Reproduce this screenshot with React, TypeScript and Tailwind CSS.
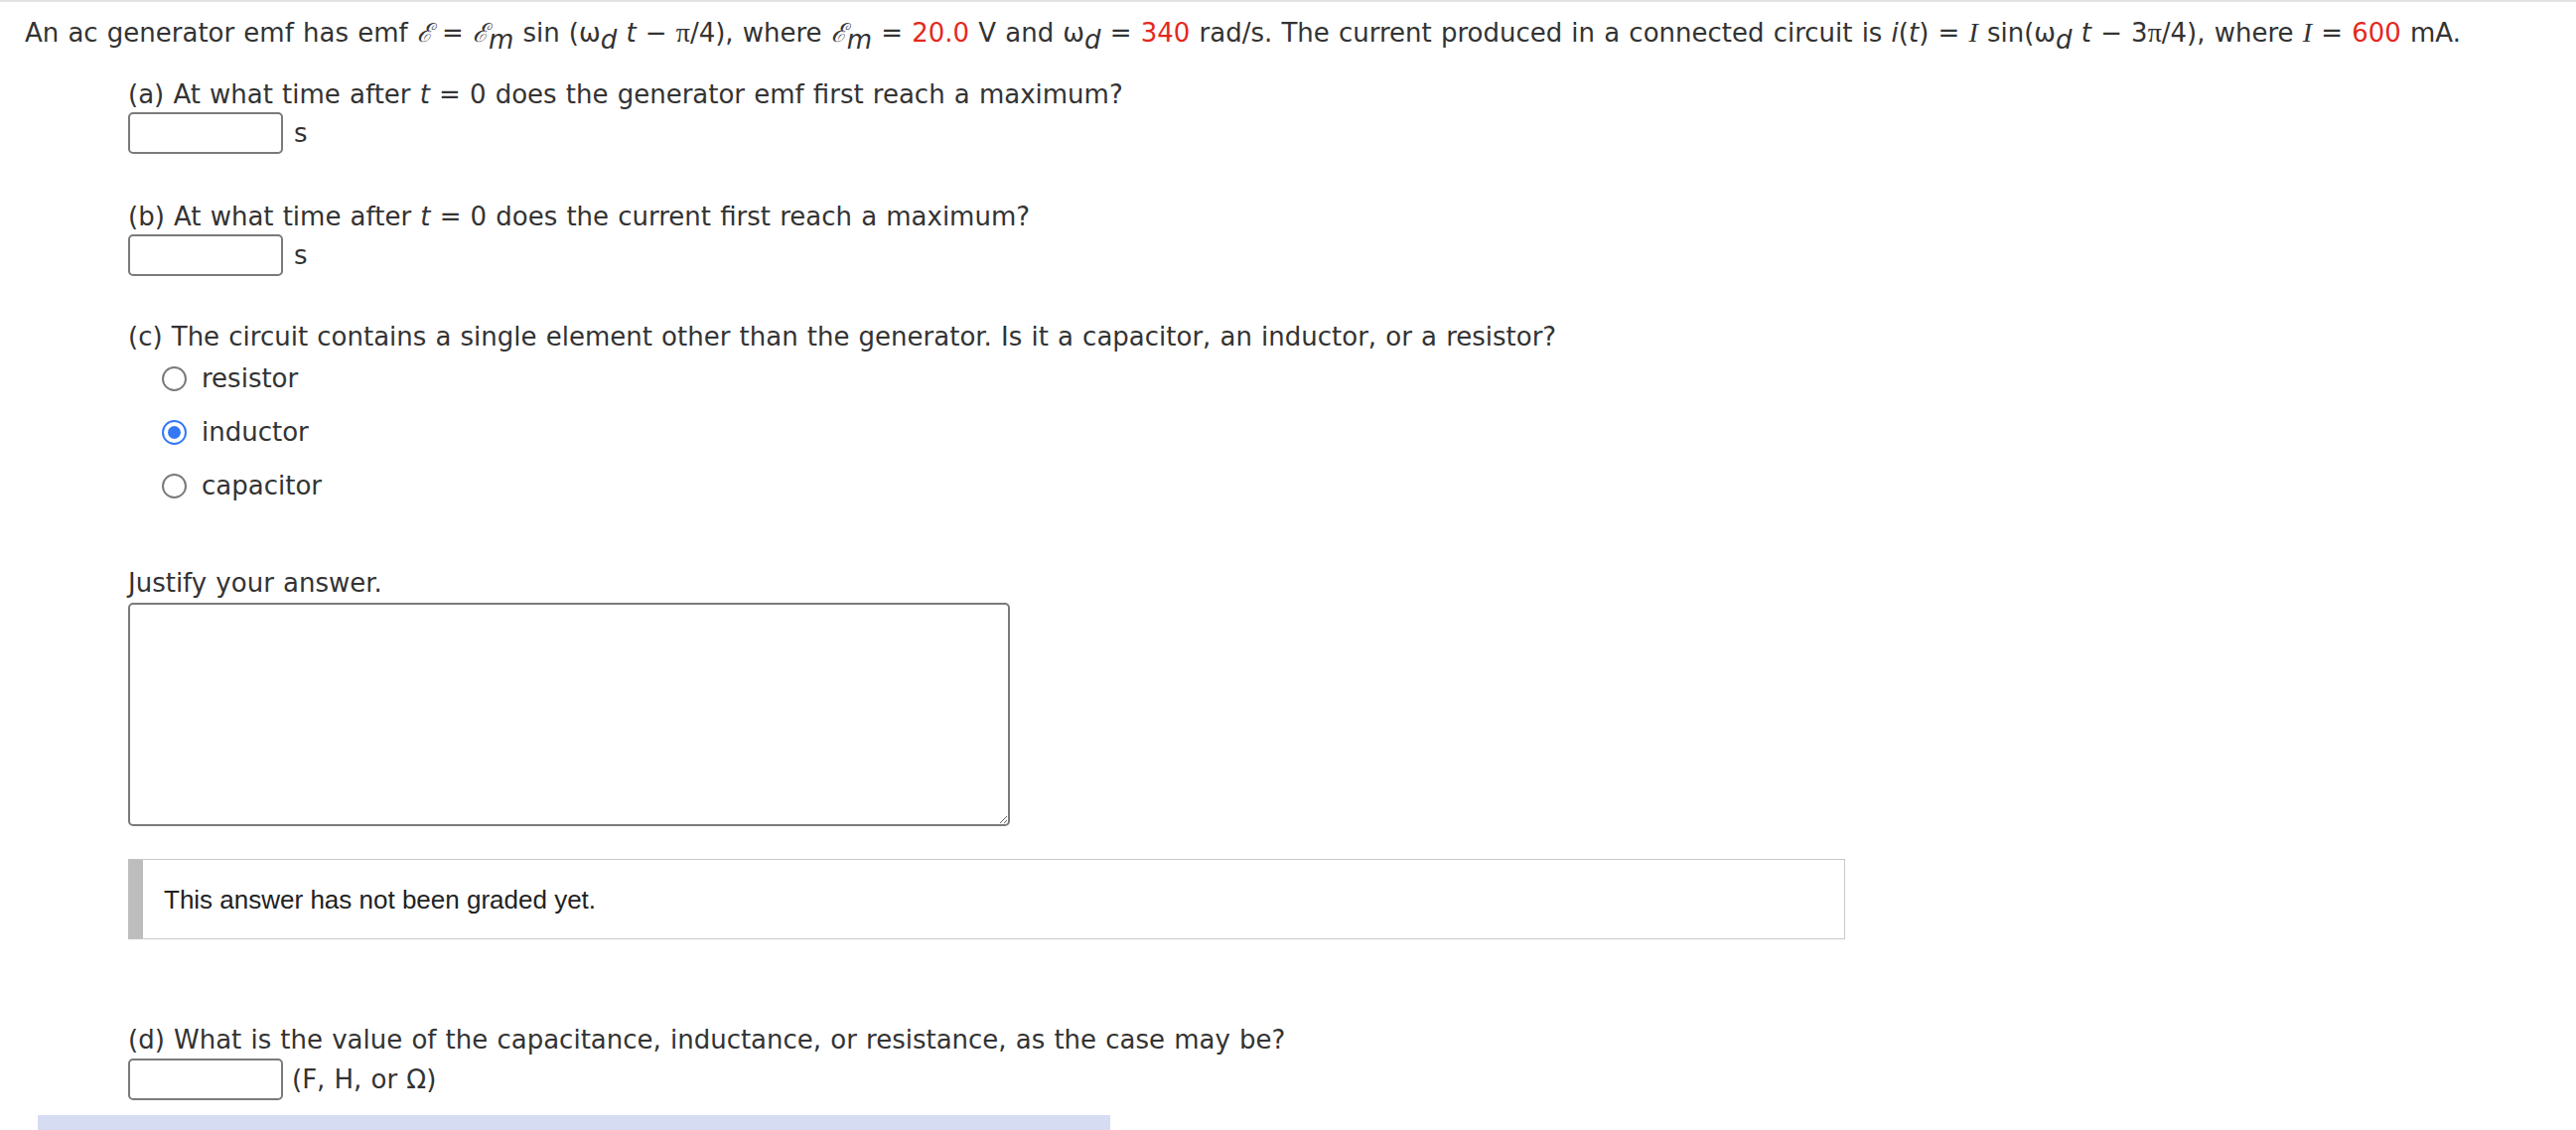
import React from "react";

const Red = ({ children }: { children: React.ReactNode }) => (
  <span className="text-[#e5281c]">{children}</span>
);

const Sub = ({ children }: { children: React.ReactNode }) => (
  <span className="relative top-[7px] italic">{children}</span>
);

const Scr = () => <span className="font-['DejaVu_Serif',serif] italic">ℰ</span>;

const Pi = () => <span className="font-['Liberation_Serif',serif] text-[28px]">π</span>;

const Radio = ({ checked }: { checked?: boolean }) =>
  checked ? (
    <span className="flex h-[25px] w-[25px] items-center justify-center rounded-full border-[2px] border-[#3478f6] bg-white">
      <span className="h-[13px] w-[13px] rounded-full bg-[#3478f6]" />
    </span>
  ) : (
    <span className="h-[25px] w-[25px] rounded-full border-[2px] border-[#7a7a7a] bg-white" />
  );

const Field = () => (
  <input
    type="text"
    className="h-[42px] w-[156px] rounded-[5px] border-[2px] border-[#7a7a7a] bg-white px-2 outline-none"
  />
);

export default function App() {
  return (
    <div className="min-h-[1138px] w-[2594px] overflow-hidden border-t-2 border-[#e2e2e2] bg-white font-['DejaVu_Sans',sans-serif] text-[26px] leading-[30px] text-[#333] [word-spacing:0.9px]">
      <p className="pl-[25px] pt-[16px] whitespace-nowrap">
        An ac generator emf has emf <Scr /> = <Scr />
        <Sub>m</Sub> sin (ω<Sub>d</Sub> <i>t</i> − <Pi />/4), where <Scr />
        <Sub>m</Sub> = <Red>20.0</Red> V and ω<Sub>d</Sub> = <Red>340</Red> rad/s. The current
        produced in a connected circuit is <i>i</i>(<i>t</i>) ={" "}
        <i className="font-['Liberation_Serif',serif] text-[28px]">I</i> sin(ω<Sub>d</Sub>{" "}
        <i>t</i> − 3<Pi />/4), where{" "}
        <i className="font-['Liberation_Serif',serif] text-[28px]">I</i> ={" "}
        <Red>600</Red> mA.
      </p>

      <div className="pl-[129px]">
        <p className="mt-[32px]">
          (a) At what time after <i>t</i> = 0 does the generator emf first reach a maximum?
        </p>
        <div className="mt-[3px] flex items-center gap-[11px]">
          <Field />
          <span>s</span>
        </div>

        <p className="mt-[48px]">
          (b) At what time after <i>t</i> = 0 does the current first reach a maximum?
        </p>
        <div className="mt-[3px] flex items-center gap-[11px]">
          <Field />
          <span>s</span>
        </div>

        <p className="mt-[46px]">
          (c) The circuit contains a single element other than the generator. Is it a capacitor,
          an inductor, or a resistor?
        </p>
        <div className="flex flex-col pl-[34px]">
          <label className="flex h-[54px] items-center gap-[15px]">
            <Radio />
            <span>resistor</span>
          </label>
          <label className="flex h-[54px] items-center gap-[15px]">
            <Radio checked />
            <span>inductor</span>
          </label>
          <label className="flex h-[54px] items-center gap-[15px]">
            <Radio />
            <span>capacitor</span>
          </label>
        </div>

        <p className="mt-[56px]">Justify your answer.</p>
        <textarea className="mt-[5px] block h-[225px] w-[888px] rounded-[5px] border-[2px] border-[#7a7a7a] bg-white outline-none" />

        <div className="mt-[33px] flex h-[81px] w-[1729px] items-center border border-l-[15px] border-[#c9c9c9] border-l-[#bdbdbd] bg-white pl-[21px] font-['Liberation_Sans',Arial,sans-serif] text-[26px] text-[#222] [word-spacing:0px]">
          This answer has not been graded yet.
        </div>

        <p className="mt-[86px]">
          (d) What is the value of the capacitance, inductance, or resistance, as the case may be?
        </p>
        <div className="mt-[4px] flex items-center gap-[9px]">
          <Field />
          <span>(F, H, or Ω)</span>
        </div>
      </div>

      <div className="ml-[38px] mt-[15px] h-[20px] w-[1080px] bg-[#d6ddf3]" />
    </div>
  );
}
